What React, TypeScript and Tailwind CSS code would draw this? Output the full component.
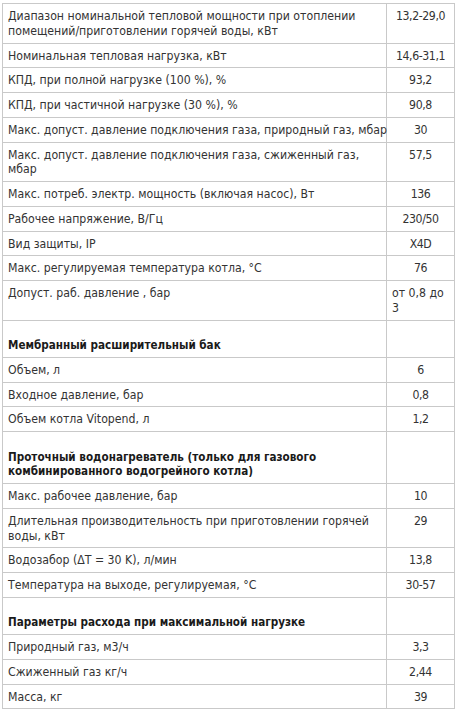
import React from "react";

type Row =
  | { kind: "row"; label: string[]; value: string[]; left?: boolean }
  | { kind: "head"; label: string[] };

const rows: Row[] = [
  { kind: "row", label: ["Диапазон номинальной тепловой мощности при отоплении", "помещений/приготовлении горячей воды, кВт"], value: ["13,2-29,0"] },
  { kind: "row", label: ["Номинальная тепловая нагрузка, кВт"], value: ["14,6-31,1"] },
  { kind: "row", label: ["КПД, при полной нагрузке (100 %), %"], value: ["93,2"] },
  { kind: "row", label: ["КПД, при частичной нагрузке (30 %), %"], value: ["90,8"] },
  { kind: "row", label: ["Макс. допуст. давление подключения газа, природный газ, мбар"], value: ["30"] },
  { kind: "row", label: ["Макс. допуст. давление подключения газа, сжиженный газ,", "мбар"], value: ["57,5"] },
  { kind: "row", label: ["Макс. потреб. электр. мощность (включая насос), Вт"], value: ["136"] },
  { kind: "row", label: ["Рабочее напряжение, В/Гц"], value: ["230/50"] },
  { kind: "row", label: ["Вид защиты, IP"], value: ["X4D"] },
  { kind: "row", label: ["Макс. регулируемая температура котла, °C"], value: ["76"] },
  { kind: "row", label: ["Допуст. раб. давление , бар"], value: ["от 0,8 до", "3"], left: true },
  { kind: "head", label: ["Мембранный расширительный бак"] },
  { kind: "row", label: ["Объем, л"], value: ["6"] },
  { kind: "row", label: ["Входное давление, бар"], value: ["0,8"] },
  { kind: "row", label: ["Объем котла Vitopend, л"], value: ["1,2"] },
  { kind: "head", label: ["Проточный водонагреватель (только для газового", "комбинированного водогрейного котла)"] },
  { kind: "row", label: ["Макс. рабочее давление, бар"], value: ["10"] },
  { kind: "row", label: ["Длительная производительность при приготовлении горячей", "воды, кВт"], value: ["29"] },
  { kind: "row", label: ["Водозабор (ΔT = 30 K), л/мин"], value: ["13,8"] },
  { kind: "row", label: ["Температура на выходе, регулируемая, °C"], value: ["30-57"] },
  { kind: "head", label: ["Параметры расхода при максимальной нагрузке"] },
  { kind: "row", label: ["Природный газ, м3/ч"], value: ["3,3"] },
  { kind: "row", label: ["Сжиженный газ кг/ч"], value: ["2,44"] },
  { kind: "row", label: ["Масса, кг"], value: ["39"] },
];

function Lines({ lines }: { lines: string[] }) {
  return (
    <>
      {lines.map((l, i) => (
        <div key={i} className="whitespace-nowrap">
          {l}
        </div>
      ))}
    </>
  );
}

export default function App() {
  return (
    <div
      className="min-h-[713px] bg-white pl-[2px] pt-[3px] text-[12.2px] leading-[14.75px] text-[#333333] font-stretch-condensed"
      style={{ fontFamily: '"DejaVu Sans Condensed", "DejaVu Sans", Tahoma, sans-serif' }}
    >
      <div className="flex w-[453px] flex-col border border-[#c9c9c9]">
        {rows.map((r, i) => {
          const last = i === rows.length - 1;
          const rb = last ? "" : "border-b border-[#c9c9c9]";
          if (r.kind === "head") {
            return (
              <div key={i} className={`flex ${rb}`}>
                <div className="w-[384px] border-r border-[#c9c9c9] pl-[5px] pt-[5px] pb-[4px] text-[11.6px] font-bold text-[#1a1a1a]">
                  <div className="h-[12.5px]" />
                  <Lines lines={r.label} />
                </div>
                <div className="flex-1" />
              </div>
            );
          }
          return (
            <div key={i} className={`flex ${rb}`}>
              <div className="w-[384px] border-r border-[#c9c9c9] pl-[5px] pt-[5px] pb-[4px]">
                <Lines lines={r.label} />
              </div>
              <div
                className={`flex-1 px-[5px] pt-[5px] pb-[4px] ${r.left ? "text-left" : "text-center tracking-[-0.4px]"}`}
              >
                <Lines lines={r.value} />
              </div>
            </div>
          );
        })}
      </div>
    </div>
  );
}
